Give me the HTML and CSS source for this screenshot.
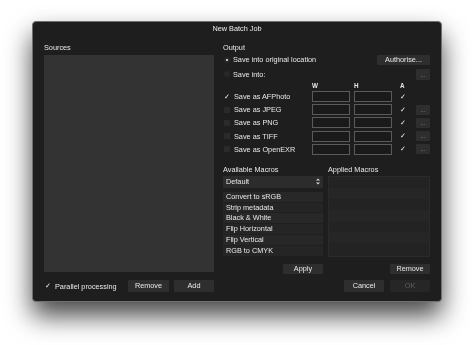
FILE: index.html
```html
<!DOCTYPE html>
<html lang="en">
<head>
    <meta charset="UTF-8">
    <title>New Batch Job</title>
    <link rel="stylesheet" href="styles.css">
</head>
<body>
    <div class="page">
        <div class="window">
            <div class="titlebar">New Batch Job</div>
            <div class="main">
                <!-- 왼쪽: 소스 목록 -->
                <div class="sources">
                    <div class="label">Sources</div>
                    <div class="source-list"></div>
                </div>

                <!-- 오른쪽: 출력 설정 -->
                <div class="output">
                    <div class="label">Output</div>
                    <div class="opt-row first">
                        <span class="radio on"></span>
                        <span class="opt-text">Save into original location</span>
                        <button class="btn auth">Authorise...</button>
                    </div>
                    <div class="opt-row second">
                        <span class="radio"></span>
                        <span class="opt-text">Save into:</span>
                        <button class="btn dots">...</button>
                    </div>

                    <div class="fmt-head">
                        <span></span><span>W</span><span>H</span><span class="a-col">A</span><span></span>
                    </div>
                    <div class="formats">
                        <div class="fmt-row">
                            <span class="fmt-name"><span class="check on">✓</span>Save as AFPhoto</span>
                            <span class="field"></span><span class="field"></span>
                            <span class="tick">✓</span><span></span>
                        </div>
                        <div class="fmt-row">
                            <span class="fmt-name"><span class="check"></span>Save as JPEG</span>
                            <span class="field"></span><span class="field"></span>
                            <span class="tick">✓</span><button class="btn dots">...</button>
                        </div>
                        <div class="fmt-row">
                            <span class="fmt-name"><span class="check"></span>Save as PNG</span>
                            <span class="field"></span><span class="field"></span>
                            <span class="tick">✓</span><button class="btn dots">...</button>
                        </div>
                        <div class="fmt-row">
                            <span class="fmt-name"><span class="check"></span>Save as TIFF</span>
                            <span class="field"></span><span class="field"></span>
                            <span class="tick">✓</span><button class="btn dots">...</button>
                        </div>
                        <div class="fmt-row">
                            <span class="fmt-name"><span class="check"></span>Save as OpenEXR</span>
                            <span class="field"></span><span class="field"></span>
                            <span class="tick">✓</span><button class="btn dots">...</button>
                        </div>
                    </div>

                    <div class="macros">
                        <div class="macro-col">
                            <div class="label">Available Macros</div>
                            <div class="select">
                                <span>Default</span>
                                <svg width="4" height="7" viewBox="0 0 4 7"><path d="M0 2.5 L2 0.5 L4 2.5 Z M0 4.5 L2 6.5 L4 4.5 Z" fill="#d8d8d8"/></svg>
                            </div>
                            <div class="macro-list">
                                <div class="item">Convert to sRGB</div>
                                <div class="item">Strip metadata</div>
                                <div class="item">Black &amp; White</div>
                                <div class="item">Flip Horizontal</div>
                                <div class="item">Flip Vertical</div>
                                <div class="item">RGB to CMYK</div>
                            </div>
                            <div class="col-btns">
                                <button class="btn wide">Apply</button>
                            </div>
                        </div>
                        <div class="macro-col">
                            <div class="label">Applied Macros</div>
                            <div class="applied-list">
                                <div class="row"></div><div class="row"></div><div class="row"></div>
                                <div class="row"></div><div class="row"></div><div class="row"></div>
                                <div class="row"></div>
                            </div>
                            <div class="col-btns">
                                <button class="btn wide">Remove</button>
                            </div>
                        </div>
                    </div>
                </div>

                <!-- 하단 버튼들 -->
                <div class="foot-left">
                    <span class="parallel"><span class="check on">✓</span>Parallel processing</span>
                    <button class="btn wide">Remove</button>
                    <button class="btn wide">Add</button>
                </div>
                <div class="foot-right">
                    <button class="btn wide">Cancel</button>
                    <button class="btn wide disabled">OK</button>
                </div>
            </div>
        </div>
    </div>
</body>
</html>
```

FILE: styles.css
```css
body {
    margin: 0;
    background: #ffffff;
    font-family: "Liberation Sans", Arial, sans-serif;
}

.page {
    padding: 21px 0 45px 32px;
}

.window {
    box-sizing: border-box;
    width: 410px;
    height: 281px;
    background: #1e1e1e;
    border: 1px solid #707070;
    border-radius: 4px;
    filter: drop-shadow(0 14px 13px rgba(0, 0, 0, 0.72));
    color: #e8e8e8;
    font-size: 7.3px;
}

.titlebar {
    height: 13px;
    line-height: 13px;
    text-align: center;
    color: #ececec;
}

.main {
    display: grid;
    grid-template-columns: 170px 207px;
    grid-template-rows: 231px 12px;
    column-gap: 9px;
    row-gap: 6px;
    padding: 8px 11px 0 11px;
}

.label {
    height: 10px;
    line-height: 10px;
}

/* 소스 */
.sources {
    display: flex;
    flex-direction: column;
}

.source-list {
    flex: 1;
    margin: 2px 0 2px 0;
    background: #333333;
}

/* 출력 */
.output {
    display: flex;
    flex-direction: column;
}

.opt-row {
    display: flex;
    align-items: center;
}

.opt-row.first {
    height: 11px;
    margin-top: 1px;
}

.opt-row.second {
    height: 12px;
    margin-top: 3px;
}

.radio {
    box-sizing: border-box;
    width: 6px;
    height: 6px;
    margin-left: 1px;
    border-radius: 50%;
    background: #282828;
    display: flex;
    align-items: center;
    justify-content: center;
}

.radio.on::after {
    content: "";
    width: 2px;
    height: 2px;
    border-radius: 50%;
    background: #f0f0f0;
}

.opt-text {
    margin-left: 3px;
}

.btn {
    box-sizing: border-box;
    border: none;
    padding: 0;
    margin: 0;
    background: #2e2e2e;
    color: #e8e8e8;
    font-family: "Liberation Sans", Arial, sans-serif;
    font-size: 7.3px;
    border-radius: 1px;
}

.btn.auth {
    margin-left: auto;
    width: 53px;
    height: 10px;
    line-height: 10px;
}

.btn.dots {
    width: 14px;
    height: 10px;
    line-height: 6px;
    font-size: 5px;
    color: #bbbbbb;
}

.opt-row .btn.dots {
    margin-left: auto;
    margin-top: 1px;
    height: 11px;
}

.fmt-head,
.fmt-row {
    display: grid;
    grid-template-columns: 85px 38px 38px 16px 14px;
    column-gap: 4px;
    align-items: center;
}

.fmt-head {
    height: 8px;
    margin-top: 2px;
    font-size: 6.3px;
    font-weight: bold;
    line-height: 8px;
}

.fmt-head .a-col {
    padding-left: 4px;
}

.formats {
    display: flex;
    flex-direction: column;
    gap: 2.2px;
    margin-top: 1px;
}

.fmt-row {
    height: 11px;
}

.fmt-name {
    display: flex;
    align-items: center;
}

.check {
    box-sizing: border-box;
    width: 6px;
    height: 6px;
    margin: 0 4px 0 1px;
    background: #2a2a2a;
    font-family: "DejaVu Sans", sans-serif;
    font-size: 7px;
    line-height: 6px;
    color: #eeeeee;
}

.check.on {
    background: none;
}

.field {
    box-sizing: border-box;
    height: 11px;
    border: 1px solid #5a5a5a;
    background: #1a1a1a;
}

.tick {
    padding-left: 4px;
    font-family: "DejaVu Sans", sans-serif;
    font-size: 7px;
    color: #eeeeee;
}

/* 매크로 */
.macros {
    display: grid;
    grid-template-columns: 100px 102px;
    column-gap: 5px;
    margin-top: 10px;
}

.macro-col {
    display: flex;
    flex-direction: column;
}

.select {
    display: flex;
    align-items: center;
    justify-content: space-between;
    height: 12px;
    margin-top: 1px;
    padding: 0 3px 0 3px;
    background: #2c2c2c;
}

.macro-list {
    margin-top: 4px;
    height: 65px;
    background: #242424;
}

.macro-list .item {
    height: 10.8px;
    line-height: 10.8px;
    padding-left: 3px;
    background: #282828;
    border-bottom: 0.5px solid #1f1f1f;
    box-sizing: border-box;
}

.macro-list .item:nth-child(even) {
    background: #252525;
}

.applied-list {
    margin-top: 1px;
    height: 81px;
    background: #232323;
    border: 0.5px solid #2a2a2a;
    box-sizing: border-box;
}

.applied-list .row {
    height: 11px;
}

.applied-list .row:nth-child(even) {
    background: #262626;
}

.col-btns {
    display: flex;
    justify-content: flex-end;
    margin-top: 7px;
}

.btn.wide {
    width: 40px;
    height: 10px;
    line-height: 10px;
}

/* 하단 */
.foot-left,
.foot-right {
    display: flex;
    align-items: center;
    gap: 5px;
}

.foot-left .btn.wide,
.foot-right .btn.wide {
    height: 12px;
    line-height: 12px;
}

.foot-left .btn.wide:first-of-type {
    margin-left: auto;
    width: 41px;
}

.parallel {
    display: flex;
    align-items: center;
}

.foot-right {
    justify-content: flex-end;
    gap: 6px;
}

.btn.disabled {
    color: #5e5e5e;
    background: #262626;
}
```
